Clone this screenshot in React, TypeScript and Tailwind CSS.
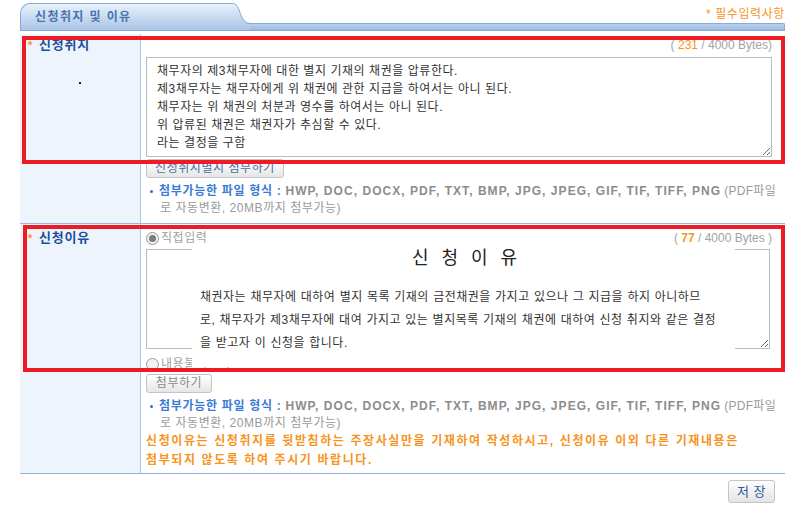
import React from "react";

function Radio({ checked }: { checked?: boolean }) {
  return (
    <span className="flex h-[13px] w-[13px] items-center justify-center rounded-full border border-[#9a9a9a] bg-[#f2f2f2]">
      {checked ? <span className="h-[7px] w-[7px] rounded-full bg-[#7c7c7c]" /> : null}
    </span>
  );
}

function FileInfo() {
  return (
    <div className="text-[12px] leading-[17px] text-[#9a9a9a]">
      <div className="flex items-center whitespace-nowrap">
        <span className="ml-[4px] mr-[6px] inline-block h-[3px] w-[3px] rounded-full bg-[#2e6fd0]" />
        <span className="font-bold tracking-[0.7px] text-[#3a7bd5]">첨부가능한 파일 형식 : </span>
        <span className="ml-[4px] font-bold tracking-[1.05px] text-[#8c8c8c]">
          HWP, DOC, DOCX, PDF, TXT, BMP, JPG, JPEG, GIF, TIF, TIFF, PNG
        </span>
        <span className="ml-[3px] tracking-[0.3px]">(PDF파일</span>
      </div>
      <div className="whitespace-nowrap pl-[14px]">로 자동변환, 20MB까지 첨부가능)</div>
    </div>
  );
}

export default function App() {
  const text1 =
    "채무자의 제3채무자에 대한 별지 기재의 채권을 압류한다.\n제3채무자는 채무자에게 위 채권에 관한 지급을 하여서는 아니 된다.\n채무자는 위 채권의 처분과 영수를 하여서는 아니 된다.\n위 압류된 채권은 채권자가 추심할 수 있다.\n라는 결정을 구함";

  return (
    <div className="relative h-[517px] w-[800px] overflow-hidden bg-white font-['Liberation_Sans','Noto_Sans_CJK_KR',sans-serif] text-[12px] tracking-[0.55px]">
      {/* header */}
      <div className="ml-[20px] mr-[15px] mt-[3px] flex items-end border-b border-[#8aacd9]">
        <div className="h-[27px] w-[213px] rounded-tl-[10px] border-l border-t border-[#86abd9] bg-linear-to-b from-[#eaf1fa] to-[#a9c4e7] pl-[14px] pt-[5px] text-[12px] font-bold leading-[16px] tracking-[1.4px] text-[#4674b0]">
          신청취지 및 이유
        </div>
        <svg width="17" height="27" viewBox="0 0 17 27" className="block shrink-0">
          <defs>
            <linearGradient id="tabg" x1="0" y1="0" x2="0" y2="27" gradientUnits="userSpaceOnUse">
              <stop offset="0" stopColor="#eaf1fa" />
              <stop offset="1" stopColor="#a9c4e7" />
            </linearGradient>
          </defs>
          <path d="M0,0 C8,0 6,20 17,20 L17,27 L0,27 Z" fill="url(#tabg)" />
          <path d="M0,0.5 C8,0.5 6,20.5 17,20.5" fill="none" stroke="#86abd9" strokeWidth="1" />
        </svg>
        <div className="flex flex-1 flex-col">
          <div className="flex h-[20px] items-center justify-end pt-[1px] text-[12px] leading-[16px] tracking-[0.6px] text-[#f7941d]">
            * 필수입력사항
          </div>
          <div className="h-[7px] rounded-tr-[2px] border-r border-t border-[#86abd9] bg-linear-to-b from-[#b9d0ec] to-[#9dbbe3]" />
        </div>
      </div>

      {/* table */}
      <div className="ml-[20px] mr-[15px] mt-[3px]">
        {/* row 1 */}
        <div className="flex border-b border-[#98b6de]">
          <div className="w-[121px] shrink-0 border-r border-[#a9c7ec] bg-[#eef4fc] pl-[8px] pt-[3px]">
            <div className="flex items-start text-[13px] font-bold leading-[16px] tracking-[0.75px] text-[#1d4f9c]">
              <span className="mr-[6px] text-[11px] text-[#f7941d]">*</span>
              신청취지
            </div>
            <div className="ml-[51px] mt-[29px] h-[2px] w-[2px] bg-[#222]" />
          </div>
          <div className="flex-1 pb-[6px] pl-[5px] pr-[13px] pt-[3px]">
            <div className="pr-[4px] text-right leading-[16px] tracking-normal text-[#a3a3a3]">
              ( <span className="text-[#f7941d]">231</span> / 4000 Bytes)
            </div>
            <textarea
              readOnly
              defaultValue={text1}
              className="mt-[4px] block h-[100px] w-[626px] border border-[#bcbcbc] bg-white pl-[10px] pt-[4px] text-[12px] leading-[18px] tracking-[0.55px] text-[#333] outline-none"
            />
            <button className="mt-[2px] block h-[19px] w-[138px] rounded-[3px] border border-[#c4c4c4] bg-linear-to-b from-white to-[#e6e6e6] text-[12px] leading-[17px] tracking-[0.55px] text-[#4b6ea5]">
              신청취지별지 첨부하기
            </button>
            <div className="mt-[5px]">
              <FileInfo />
            </div>
          </div>
        </div>

        {/* row 2 */}
        <div className="flex border-b border-[#8fb0dc]">
          <div className="w-[121px] shrink-0 border-r border-[#a9c7ec] bg-[#eef4fc] pl-[8px] pt-[6px]">
            <div className="flex items-start text-[13px] font-bold leading-[16px] tracking-[0.75px] text-[#1d4f9c]">
              <span className="mr-[6px] text-[11px] text-[#f7941d]">*</span>
              신청이유
            </div>
          </div>
          <div className="flex-1 pb-[4px] pl-[5px] pr-[13px] pt-[6px]">
            <div className="flex h-[16px] items-center justify-between leading-[16px]">
              <div className="flex items-center text-[#a0a0a0]">
                <Radio checked />
                <span className="ml-[2px]">직접입력</span>
              </div>
              <div className="pr-[4px] tracking-normal text-[#a3a3a3]">
                ( <span className="font-bold text-[#f7941d]">77</span> / 4000 Bytes )
              </div>
            </div>
            <div className="relative mt-[3px]">
              <textarea
                readOnly
                defaultValue=""
                className="block h-[100px] w-[624px] border border-[#bcbcbc] bg-white outline-none"
              />
              <div className="absolute left-[46px] top-[-2px] h-[120px] w-[543px] bg-white px-[8px]">
                <div className="pl-[6px] text-center text-[18px] leading-[22px] tracking-[4px] text-[#222]">
                  신 청 이 유
                </div>
                <div className="mt-[17px] whitespace-nowrap text-[12px] leading-[23px] tracking-[0.5px] text-[#333] [word-spacing:0.4px]">
                  <div>채권자는 채무자에 대하여 별지 목록 기재의 금전채권을 가지고 있으나 그 지급을 하지 아니하므</div>
                  <div>로, 채무자가 제3채무자에 대여 가지고 있는 별지목록 기재의 채권에 대하여 신청 취지와 같은 결정</div>
                  <div>을 받고자 이 신청을 합니다.</div>
                </div>
              </div>
            </div>
            <div className="mt-[7px] flex h-[16px] items-center leading-[16px] text-[#a0a0a0]">
              <Radio />
              <span className="ml-[2px]">내용불러오기</span>
            </div>
            <button className="mt-[2px] block h-[19px] w-[66px] rounded-[3px] border border-[#c4c4c4] bg-linear-to-b from-white to-[#e6e6e6] text-[12px] leading-[17px] tracking-[0.55px] text-[#8a8a8a]">
              첨부하기
            </button>
            <div className="mt-[5px]">
              <FileInfo />
            </div>
            <div className="whitespace-nowrap text-[12px] font-bold leading-[18.5px] tracking-[1.6px] text-[#f7931e]">
              <div>신청이유는 신청취지를 뒷받침하는 주장사실만을 기재하여 작성하시고, 신청이유 이외 다른 기재내용은</div>
              <div>첨부되지 않도록 하여 주시기 바랍니다.</div>
            </div>
          </div>
        </div>

        <div className="mt-[6px] flex justify-end pr-[10px]">
          <button className="h-[23px] w-[47px] rounded-[3px] border border-[#c4c4c4] bg-linear-to-b from-white to-[#e4e4e4] text-[13px] leading-[20px] tracking-[0.5px] text-[#2d5a9c]">
            저 장
          </button>
        </div>
      </div>

      {/* red highlight boxes */}
      <div className="pointer-events-none absolute left-[22px] top-[36px] h-[128px] w-[763px] border-4 border-[#ed1c24]" />
      <div className="pointer-events-none absolute left-[23px] top-[225px] h-[147px] w-[762px] border-4 border-[#ed1c24]" />
    </div>
  );
}
